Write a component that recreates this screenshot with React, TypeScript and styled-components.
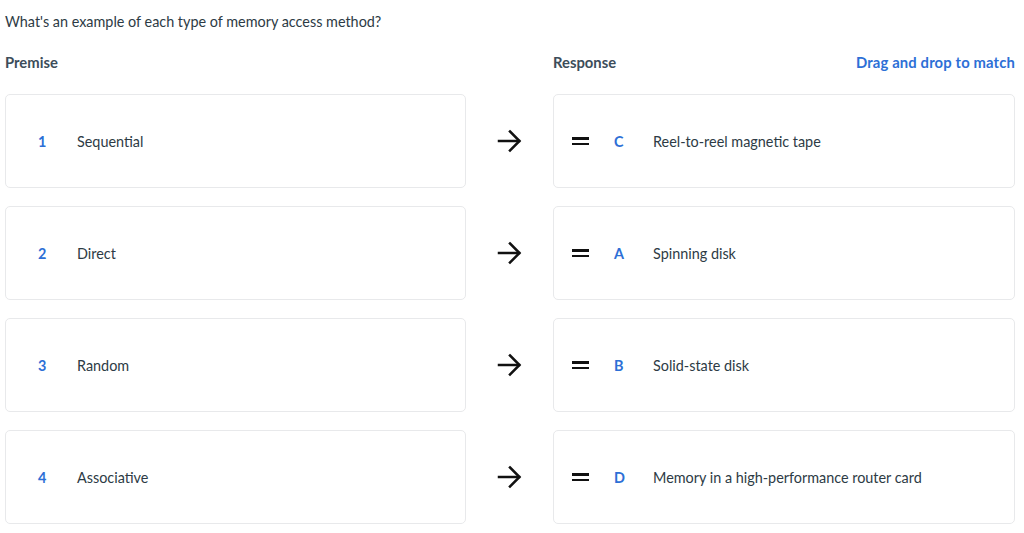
import React from "react";
import styled, { createGlobalStyle } from "styled-components";

const Global = createGlobalStyle`
  html, body { margin: 0; padding: 0; background: #fff; }
  body { font-family: Lato, "Noto Sans", sans-serif; color: #2d3b45; }
`;

const Page = styled.div`
  padding: 13px 9px 0 5px;
  box-sizing: border-box;
  width: 1024px;
`;

const Question = styled.div`
  font-size: 14.4px;
  line-height: 18px;
  color: #2d3b45;
`;

const Grid = styled.div`
  display: grid;
  grid-template-columns: 461px 87px 1fr;
  row-gap: 18px;
  margin-top: 22px;
`;

const Header = styled.div`
  font-size: 14.8px;
  font-weight: 700;
  color: #3c4d5a;
  line-height: 18px;
  display: flex;
  justify-content: space-between;
  margin-bottom: 5px;
`;

const Link = styled.span`
  color: #2d6fd6;
  letter-spacing: 0.15px;
`;

const Card = styled.div<{ $pad: number }>`
  height: 94px;
  box-sizing: border-box;
  border: 1px solid #e8e9eb;
  border-radius: 5px;
  display: flex;
  align-items: center;
  font-size: 14.4px;
  padding-left: ${(p) => p.$pad}px;
`;

const Num = styled.span`
  color: #2d6fd6;
  font-weight: 700;
  width: 39px;
  flex: none;
`;

const Label = styled.span`
  color: #2d3b45;
`;

const ArrowCell = styled.div`
  display: flex;
  align-items: center;
  justify-content: center;
`;

const Equals = styled.span`
  display: flex;
  flex-direction: column;
  gap: 3px;
  width: 17px;
  margin-right: 25px;
  flex: none;
  & > i { display: block; height: 2.5px; background: #111; }
`;

const Arrow = () => (
  <svg width="26" height="24" viewBox="0 0 26 24" fill="none" stroke="#111" strokeWidth="2.5" strokeLinecap="square">
    <path d="M2 12 H22" />
    <path d="M13 2.5 L22.5 12 L13 21.5" />
  </svg>
);

const rows = [
  ["1", "Sequential", "C", "Reel-to-reel magnetic tape"],
  ["2", "Direct", "A", "Spinning disk"],
  ["3", "Random", "B", "Solid-state disk"],
  ["4", "Associative", "D", "Memory in a high-performance router card"],
];

export default function App() {
  return (
    <Page>
      <Global />
      <Question>What's an example of each type of memory access method?</Question>
      <Grid>
        <Header>Premise</Header>
        <div />
        <Header>
          <span>Response</span>
          <Link>Drag and drop to match</Link>
        </Header>
        {rows.map(([n, p, l, r]) => (
          <React.Fragment key={n}>
            <Card $pad={32}>
              <Num>{n}</Num>
              <Label>{p}</Label>
            </Card>
            <ArrowCell>
              <Arrow />
            </ArrowCell>
            <Card $pad={18}>
              <Equals>
                <i />
                <i />
              </Equals>
              <Num>{l}</Num>
              <Label>{r}</Label>
            </Card>
          </React.Fragment>
        ))}
      </Grid>
    </Page>
  );
}
